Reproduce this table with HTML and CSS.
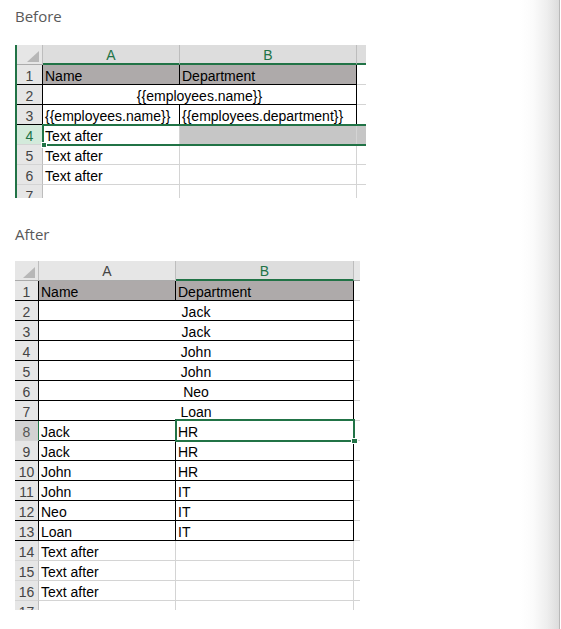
FILE: index.html
```html
<!DOCTYPE html>
<html>
<head>
<meta charset="utf-8">
<link rel="stylesheet" href="styles.css">
</head>
<body>
<div class="page">
  <main class="content">
    <h2 class="label">Before</h2>
    <div class="sheet before">
      <div class="row hdr">
        <div class="corner"><svg width="12" height="11" viewBox="0 0 12 11"><polygon points="12,0 12,11 0,11" fill="#b7b7b7"/></svg></div>
        <div class="ch on">A</div>
        <div class="ch on">B</div>
        <div class="ch on x"></div>
      </div>
      <div class="row">
        <div class="rh k">1</div>
        <div class="c k gray">Name</div>
        <div class="c k gray">Department</div>
        <div class="c x"></div>
      </div>
      <div class="row">
        <div class="rh k">2</div>
        <div class="c k m">{{employees.name}}</div>
        <div class="c x"></div>
      </div>
      <div class="row">
        <div class="rh k">3</div>
        <div class="c k">{{employees.name}}</div>
        <div class="c k">{{employees.department}}</div>
        <div class="c x"></div>
      </div>
      <div class="row rel">
        <div class="rh rsel">4</div>
        <div class="c">Text after</div>
        <div class="c shade"></div>
        <div class="c x shade"></div>
        <div class="sel sel-before"><span class="fh fh-before"></span></div>
      </div>
      <div class="row">
        <div class="rh">5</div>
        <div class="c">Text after</div>
        <div class="c"></div>
        <div class="c x"></div>
      </div>
      <div class="row">
        <div class="rh">6</div>
        <div class="c">Text after</div>
        <div class="c"></div>
        <div class="c x"></div>
      </div>
      <div class="row">
        <div class="rh">7</div>
        <div class="c"></div>
        <div class="c"></div>
        <div class="c x"></div>
      </div>
    </div>

    <h2 class="label label-after">After</h2>
    <div class="sheet after">
      <div class="row hdr">
        <div class="corner"><svg width="12" height="11" viewBox="0 0 12 11"><polygon points="12,0 12,11 0,11" fill="#b7b7b7"/></svg></div>
        <div class="ch">A</div>
        <div class="ch on">B</div>
        <div class="ch x"></div>
      </div>
      <div class="row">
        <div class="rh k">1</div>
        <div class="c k gray">Name</div>
        <div class="c k gray">Department</div>
        <div class="c x"></div>
      </div>
      <div class="row"><div class="rh k">2</div><div class="c k m">Jack</div><div class="c x"></div></div>
      <div class="row"><div class="rh k">3</div><div class="c k m">Jack</div><div class="c x"></div></div>
      <div class="row"><div class="rh k">4</div><div class="c k m">John</div><div class="c x"></div></div>
      <div class="row"><div class="rh k">5</div><div class="c k m">John</div><div class="c x"></div></div>
      <div class="row"><div class="rh k">6</div><div class="c k m">Neo</div><div class="c x"></div></div>
      <div class="row"><div class="rh k">7</div><div class="c k m">Loan</div><div class="c x"></div></div>
      <div class="row rel">
        <div class="rh act">8</div>
        <div class="c k">Jack</div>
        <div class="c k">HR</div>
        <div class="c x"></div>
        <div class="sel sel-after"><span class="fh fh-after"></span></div>
      </div>
      <div class="row"><div class="rh k">9</div><div class="c k">Jack</div><div class="c k">HR</div><div class="c x"></div></div>
      <div class="row"><div class="rh k">10</div><div class="c k">John</div><div class="c k">HR</div><div class="c x"></div></div>
      <div class="row"><div class="rh k">11</div><div class="c k">John</div><div class="c k">IT</div><div class="c x"></div></div>
      <div class="row"><div class="rh k">12</div><div class="c k">Neo</div><div class="c k">IT</div><div class="c x"></div></div>
      <div class="row"><div class="rh k">13</div><div class="c k">Loan</div><div class="c k">IT</div><div class="c x"></div></div>
      <div class="row"><div class="rh">14</div><div class="c">Text after</div><div class="c"></div><div class="c x"></div></div>
      <div class="row"><div class="rh">15</div><div class="c">Text after</div><div class="c"></div><div class="c x"></div></div>
      <div class="row"><div class="rh">16</div><div class="c">Text after</div><div class="c"></div><div class="c x"></div></div>
      <div class="row"><div class="rh">17</div><div class="c"></div><div class="c"></div><div class="c x"></div></div>
    </div>
  </main>
  <div class="edge"></div>
</div>
</body>
</html>
```

FILE: styles.css
```css
html, body {
  margin: 0;
  padding: 0;
  background: #ffffff;
}

.page {
  display: flex;
  width: 561px;
  height: 629px;
  overflow: hidden;
}

.content {
  flex: 1;
  padding: 6px 0 0 15px;
}

.edge {
  width: 40px;
  margin-right: 1px;
  border-right: 1px solid #b8b8b8;
  background: linear-gradient(to right, #ffffff 0%, #fbfbfb 35%, #eeeeee 70%, #dcdcdc 100%);
}

.label {
  margin: 0 0 19px;
  height: 20px;
  line-height: 20px;
  font-family: "Open Sans", "Liberation Sans", sans-serif;
  font-size: 15px;
  font-weight: normal;
  color: #595959;
}

.label-after {
  margin-bottom: 17px;
}

.sheet {
  display: flex;
  flex-direction: column;
  overflow: hidden;
  box-sizing: border-box;
  font-family: "Liberation Sans", Arial, sans-serif;
  font-size: 14px;
  color: #000000;
}

.before {
  --cols: 26px 137px 177px 9px;
  width: 351px;
  height: 153px;
  border-left: 2px solid #217346;
  margin-bottom: 26px;
}

.after {
  --cols: 24px 137px 178px 6px;
  width: 345px;
  height: 349px;
}

.row {
  display: grid;
  grid-template-columns: var(--cols);
  height: 20px;
  flex: none;
}

.rel {
  position: relative;
}

.row > .c,
.row > .rh,
.row > .ch,
.row > .corner {
  box-sizing: border-box;
  height: 20px;
  border-right: 1px solid #d4d4d4;
  border-bottom: 1px solid #d4d4d4;
  white-space: nowrap;
}

.c {
  padding: 1px 2px 0;
  line-height: 20px;
}

.rh {
  background: #e6e6e6;
  color: #444444;
  text-align: center;
  padding-top: 1px;
  line-height: 20px;
  border-right-color: #bdbdbd !important;
}

.ch {
  background: #e6e6e6;
  color: #444444;
  text-align: center;
  line-height: 18px;
  padding-top: 1px;
  border-right-color: #bdbdbd !important;
  border-bottom-color: #ababab !important;
}

.ch.on {
  background: #dddddd;
  color: #217346;
  border-bottom: 2px solid #217346 !important;
}

.corner {
  background: #e6e6e6;
  display: flex;
  justify-content: flex-end;
  align-items: flex-end;
  padding: 0 3px 2px 0;
  border-right-color: #bdbdbd !important;
  border-bottom-color: #ababab !important;
}

.corner svg {
  display: block;
}

.row > .k {
  border-right-color: #000000;
  border-bottom-color: #000000;
}

.row > .rh.k {
  border-right-color: #000000 !important;
}

.gray {
  background: #aeaaaa;
}

.m {
  grid-column: span 2;
  text-align: center;
}

.row > .x {
  border-right: none;
}

.shade {
  background: #c6c6c6;
}

.rsel {
  background: #d3eadb;
  color: #217346;
}

.rh.act {
  background: #d2d2d2;
  color: #555555;
  border-right-color: #217346 !important;
}

.sel {
  position: absolute;
  z-index: 1;
  border: 2px solid #217346;
  pointer-events: none;
}

.sel-before {
  left: 25px;
  right: -3px;
  top: -1px;
  bottom: -1px;
}

.sel-after {
  left: 160px;
  width: 176px;
  top: -2px;
  height: 19px;
}

.fh {
  position: absolute;
  display: block;
  background: #217346;
  box-shadow: 0 0 0 1px #ffffff;
}

.fh-before {
  left: -2px;
  bottom: -3px;
  width: 4px;
  height: 4px;
}

.fh-after {
  right: -4px;
  bottom: -3px;
  width: 5px;
  height: 4px;
}
```
